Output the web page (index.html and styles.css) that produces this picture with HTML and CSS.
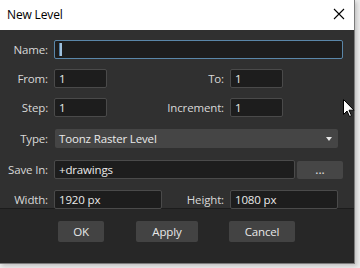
FILE: index.html
```html
<!DOCTYPE html>
<html lang="en">
<head>
    <meta charset="UTF-8">
    <title>New Level</title>
    <link rel="stylesheet" href="styles.css">
</head>
<body>
    <div class="window">
        <header class="titlebar">
            <span class="title">New Level</span>
            <svg class="close" width="12" height="12" viewBox="0 0 12 12">
                <path d="M1 1 L11 11 M11 1 L1 11" stroke="#000" stroke-width="1.1" fill="none"/>
            </svg>
        </header>
        <section class="form">
            <div class="row">
                <label class="lbl">Name:</label>
                <div class="field name focused"><span class="caret"></span></div>
            </div>
            <div class="row">
                <label class="lbl">From:</label>
                <div class="field small">1</div>
                <label class="lbl mid">To:</label>
                <div class="field small">1</div>
            </div>
            <div class="row">
                <label class="lbl">Step:</label>
                <div class="field small">1</div>
                <label class="lbl mid">Increment:</label>
                <div class="field small">1</div>
            </div>
            <div class="row">
                <label class="lbl">Type:</label>
                <div class="combo">
                    <span>Toonz Raster Level</span>
                    <span class="arrow"></span>
                </div>
            </div>
            <div class="row">
                <label class="lbl">Save In:</label>
                <div class="field path">+drawings</div>
                <button class="browse" type="button">...</button>
            </div>
            <div class="row">
                <label class="lbl">Width:</label>
                <div class="field wide">1920 px</div>
                <label class="lbl mid2">Height:</label>
                <div class="field wide">1080 px</div>
            </div>
        </section>
        <footer class="buttons">
            <button class="btn ok" type="button">OK</button>
            <button class="btn apply" type="button">Apply</button>
            <button class="btn cancel" type="button">Cancel</button>
        </footer>
    </div>

    <svg class="cursor" width="12" height="19" viewBox="0 0 12 19">
        <path d="M0.5 0.5 L0.5 15.5 L4 12 L6.5 17.5 L8.5 16.6 L6 11.2 L11 11.2 Z" fill="#fff" stroke="#000" stroke-width="1"/>
    </svg>
</body>
</html>
```

FILE: styles.css
```css
body {
    margin: 0;
    background: #ececec;
    font-family: "Open Sans", "Noto Sans", sans-serif;
    font-size: 11.5px;
    letter-spacing: -0.15px;
    position: relative;
    height: 268px;
    overflow: hidden;
}
.window {
    width: 354px;
    height: 263px;
    border-right: 1px solid #7c7c7c;
    border-bottom: 1px solid #7c7c7c;
    box-shadow: 2px 2px 4px rgba(0,0,0,0.18);
    background: #303030;
    display: flex;
    flex-direction: column;
}
.titlebar {
    height: 30px;
    background: #fff;
    display: flex;
    align-items: center;
    justify-content: space-between;
    padding: 0 9px 0 7px;
    flex-shrink: 0;
}
.title {
    color: #000;
    font-size: 12px;
    margin-top: -2px;
}
.close {
    margin-top: -2px;
}
.form {
    padding-top: 10px;
    display: flex;
    flex-direction: column;
    gap: 10px;
    height: 179px;
    border-bottom: 1px solid #1c1c1c;
    box-sizing: border-box;
}
.row {
    display: flex;
    align-items: center;
    height: 19px;
}
.row:nth-child(4) { margin-top: 2px; }
.row:nth-child(5) { margin-top: 2px; }
.row:nth-child(6) { margin-top: 1px; }
.lbl {
    width: 48px;
    text-align: right;
    color: #d8d8d8;
    margin-right: 6px;
    flex-shrink: 0;
}
.lbl.mid { width: 117px; }
.lbl.mid2 { width: 62px; }
.field {
    height: 19px;
    box-sizing: border-box;
    background: #1d1d1d;
    border: 1px solid #4a4a4a;
    border-radius: 2px;
    color: #eaeaea;
    padding-left: 4px;
    line-height: 16px;
    display: flex;
    align-items: center;
}
.field.name { width: 289px; }
.field.small { width: 53px; }
.field.path { width: 241px; }
.field.wide { width: 108px; }
.focused {
    border-color: #5a86a8;
}
.caret {
    width: 2px;
    height: 13px;
    background: #9ec0dc;
    border-left: 1px solid #4f7ea6;
}
.combo {
    width: 283px;
    height: 19px;
    margin-left: 1px;
    background: #454545;
    border-radius: 2px;
    color: #eaeaea;
    display: flex;
    align-items: center;
    justify-content: space-between;
    padding: 0 6px 0 4px;
    box-sizing: border-box;
}
.arrow {
    width: 0;
    height: 0;
    border-left: 3px solid transparent;
    border-right: 3px solid transparent;
    border-top: 4px solid #e6e6e6;
}
.browse {
    margin-left: 2px;
    width: 46px;
    height: 18px;
    background: #464646;
    border: none;
    border-radius: 2px;
    color: #e0e0e0;
    font-family: inherit;
    font-size: 12px;
    line-height: 10px;
    padding: 0;
}
.buttons {
    flex: 1;
    background: #272727;
    display: flex;
    align-items: flex-start;
    padding-top: 12px;
    padding-left: 58px;
    box-sizing: border-box;
}
.btn {
    height: 21px;
    background: #434343;
    border: none;
    border-radius: 2px;
    color: #e8e8e8;
    font-family: inherit;
    font-size: 11.5px;
    letter-spacing: -0.15px;
    padding: 0;
}
.ok { width: 46px; }
.apply { width: 62px; margin-left: 32px; }
.cancel { width: 66px; margin-left: 31px; }
.cursor {
    position: absolute;
    left: 343px;
    top: 99px;
}
```
